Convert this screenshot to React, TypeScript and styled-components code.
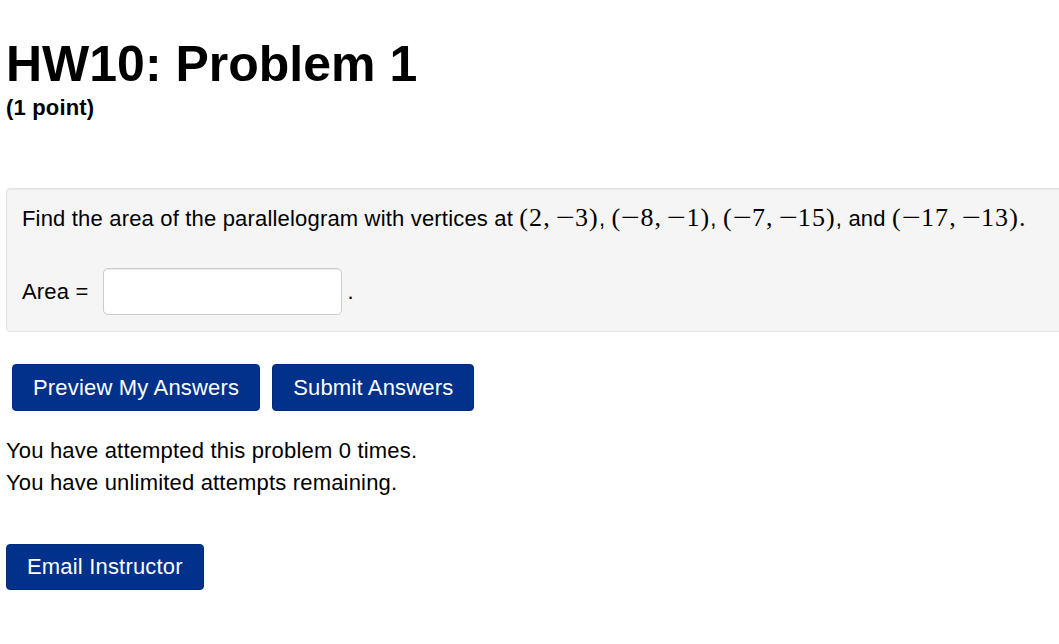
import styled, { createGlobalStyle } from "styled-components";

const GlobalStyle = createGlobalStyle`
  html, body {
    margin: 0;
    padding: 0;
    overflow: hidden;
    background: #ffffff;
  }
  body {
    font-family: "Liberation Sans", Arial, sans-serif;
    color: #000000;
    letter-spacing: 0.18px;
  }
`;

// Layout
const Page = styled.div`
  padding: 36px 0 0 6px;
`;

const Title = styled.h1`
  margin: 0;
  font-size: 50px;
  line-height: 56px;
  font-weight: bold;
  letter-spacing: 0;
`;

const Points = styled.div`
  margin-top: 3px;
  font-size: 22px;
  line-height: 26px;
  font-weight: bold;
`;

const Well = styled.div`
  margin-top: 67px;
  width: 1080px;
  box-sizing: border-box;
  padding: 14px 15px 16px;
  background-color: #f5f5f5;
  border: 1px solid #e3e3e3;
  border-radius: 4px;
  box-shadow: inset 0 1px 1px rgba(0, 0, 0, 0.05);
`;

const Question = styled.p`
  margin: 0;
  font-size: 22px;
  line-height: 32px;
`;

// TeX-style maths set in a serif face
const Math = styled.span`
  font-family: "Liberation Serif", "Times New Roman", serif;
  font-size: 26px;
  line-height: 1;
  letter-spacing: 1.1px;
`;

// TeX minus is much wider than the Times one
const Minus = styled.span`
  display: inline-block;
  width: 0.74em;
  text-align: center;
  letter-spacing: 0;
  transform: scaleX(1.3);
`;

const ThinSpace = styled.span`
  display: inline-block;
  width: 5px;
`;

const AnswerRow = styled.div`
  margin-top: 33px;
  display: flex;
  align-items: center;
  font-size: 22px;
  line-height: 32px;
`;

const AnswerInput = styled.input`
  margin-left: 14px;
  width: 239px;
  height: 47px;
  box-sizing: border-box;
  border: 1px solid #cccccc;
  border-radius: 5px;
  background: #ffffff;
  box-shadow: inset 0 1px 1px rgba(0, 0, 0, 0.075);
  font-size: 20px;
  padding: 4px 10px;
`;

const Period = styled.span`
  margin-left: 6px;
`;

const ButtonRow = styled.div`
  margin: 32px 0 0 6px;
  display: flex;
  gap: 12px;
`;

const Button = styled.button<{ $h?: number }>`
  height: ${(p) => p.$h ?? 47}px;
  padding: 0 20px;
  background-color: #01318b;
  border: 1px solid #012a78;
  border-radius: 4px;
  color: #ffffff;
  font-family: "Liberation Sans", Arial, sans-serif;
  font-size: 22px;
  letter-spacing: 0.18px;
  cursor: pointer;
`;

const Attempts = styled.div`
  margin-top: 24px;
  font-size: 22px;
  line-height: 32px;
`;

const EmailRow = styled.div`
  margin-top: 45px;
  display: flex;
`;

const Num = ({ v }: { v: number }) =>
  v < 0 ? (
    <>
      <Minus>−</Minus>
      {String(-v)}
    </>
  ) : (
    <>{v}</>
  );

const Tuple = ({ a, b }: { a: number; b: number }) => (
  <Math>
    (<Num v={a} />,<ThinSpace />
    <Num v={b} />)
  </Math>
);

export default function App() {
  return (
    <>
      <GlobalStyle />
      <Page>
        <Title>HW10: Problem 1</Title>
        <Points>(1 point)</Points>

        <Well>
          <Question>
            Find the area of the parallelogram with vertices at{" "}
            <Tuple a={2} b={-3} />, <Tuple a={-8} b={-1} />,{" "}
            <Tuple a={-7} b={-15} />, and <Tuple a={-17} b={-13} />
            <Math>.</Math>
          </Question>
          <AnswerRow>
            Area =
            <AnswerInput type="text" aria-label="Area" />
            <Period>.</Period>
          </AnswerRow>
        </Well>

        <ButtonRow>
          <Button>Preview My Answers</Button>
          <Button>Submit Answers</Button>
        </ButtonRow>

        <Attempts>
          You have attempted this problem 0 times.
          <br />
          You have unlimited attempts remaining.
        </Attempts>

        <EmailRow>
          <Button $h={46}>Email Instructor</Button>
        </EmailRow>
      </Page>
    </>
  );
}
